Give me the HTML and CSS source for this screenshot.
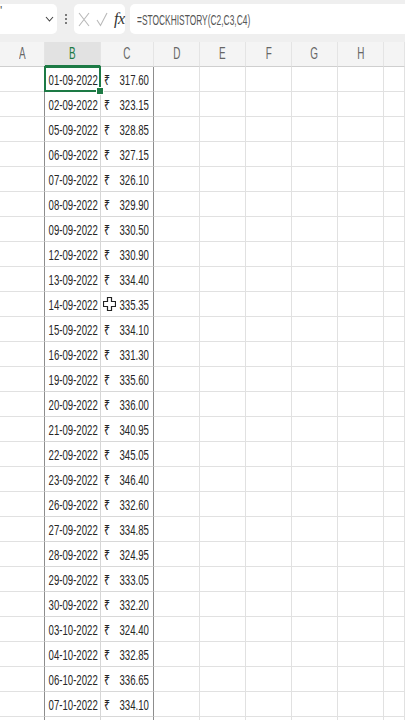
FILE: index.html
```html
<!DOCTYPE html>
<html>
<head>
<meta charset="utf-8">
<link rel="stylesheet" href="styles.css">
</head>
<body>
<div class="toolbar">
  <div class="namebox"><span class="tick">'</span><svg class="chev" width="9" height="6" viewBox="0 0 9 6"><path d="M1 1 L4.5 5 L8 1" fill="none" stroke="#444" stroke-width="1.1"/></svg></div>
  <div class="dots"><i></i><i></i><i></i></div>
  <div class="fxbox">
    <svg width="12" height="15" viewBox="0 0 12 15"><path d="M1 1 L11 14 M11 1 L1 14" stroke="#b9b9b9" stroke-width="1.1" fill="none"/></svg>
    <svg width="12" height="15" viewBox="0 0 12 15"><path d="M1 8 L4.5 13.5 L11 1" stroke="#b9b9b9" stroke-width="1.1" fill="none"/></svg>
    <span class="fx">fx</span>
  </div>
  <div class="formula"><span class="ft">=STOCKHISTORY(C2,C3,C4)</span></div>
</div>
<div class="sheet">
  <div class="row head">
    <div class="c"><span class="h">A</span></div><div class="c sel"><span class="h">B</span></div><div class="c"><span class="h">C</span></div><div class="c"><span class="h">D</span></div><div class="c"><span class="h">E</span></div><div class="c"><span class="h">F</span></div><div class="c"><span class="h">G</span></div><div class="c"><span class="h">H</span></div><div class="c"></div>
  </div>
  <div class="row"><div class="c a"></div><div class="c b active"><span class="t">01-09-2022</span></div><div class="c cc"><span class="r">₹</span><span class="t">317.60</span></div><div class="c"></div><div class="c"></div><div class="c"></div><div class="c"></div><div class="c"></div><div class="c"></div></div>
  <div class="row"><div class="c a"></div><div class="c b"><span class="t">02-09-2022</span></div><div class="c cc"><span class="r">₹</span><span class="t">323.15</span></div><div class="c"></div><div class="c"></div><div class="c"></div><div class="c"></div><div class="c"></div><div class="c"></div></div>
  <div class="row"><div class="c a"></div><div class="c b"><span class="t">05-09-2022</span></div><div class="c cc"><span class="r">₹</span><span class="t">328.85</span></div><div class="c"></div><div class="c"></div><div class="c"></div><div class="c"></div><div class="c"></div><div class="c"></div></div>
  <div class="row"><div class="c a"></div><div class="c b"><span class="t">06-09-2022</span></div><div class="c cc"><span class="r">₹</span><span class="t">327.15</span></div><div class="c"></div><div class="c"></div><div class="c"></div><div class="c"></div><div class="c"></div><div class="c"></div></div>
  <div class="row"><div class="c a"></div><div class="c b"><span class="t">07-09-2022</span></div><div class="c cc"><span class="r">₹</span><span class="t">326.10</span></div><div class="c"></div><div class="c"></div><div class="c"></div><div class="c"></div><div class="c"></div><div class="c"></div></div>
  <div class="row"><div class="c a"></div><div class="c b"><span class="t">08-09-2022</span></div><div class="c cc"><span class="r">₹</span><span class="t">329.90</span></div><div class="c"></div><div class="c"></div><div class="c"></div><div class="c"></div><div class="c"></div><div class="c"></div></div>
  <div class="row"><div class="c a"></div><div class="c b"><span class="t">09-09-2022</span></div><div class="c cc"><span class="r">₹</span><span class="t">330.50</span></div><div class="c"></div><div class="c"></div><div class="c"></div><div class="c"></div><div class="c"></div><div class="c"></div></div>
  <div class="row"><div class="c a"></div><div class="c b"><span class="t">12-09-2022</span></div><div class="c cc"><span class="r">₹</span><span class="t">330.90</span></div><div class="c"></div><div class="c"></div><div class="c"></div><div class="c"></div><div class="c"></div><div class="c"></div></div>
  <div class="row"><div class="c a"></div><div class="c b"><span class="t">13-09-2022</span></div><div class="c cc"><span class="r">₹</span><span class="t">334.40</span></div><div class="c"></div><div class="c"></div><div class="c"></div><div class="c"></div><div class="c"></div><div class="c"></div></div>
  <div class="row"><div class="c a"></div><div class="c b"><span class="t">14-09-2022</span></div><div class="c cc"><span class="r hide">₹</span><span class="t">335.35</span><svg class="cursor" width="13" height="14" viewBox="0 0 13 14"><path d="M4.5 0.5 H8.5 V4.5 H12.5 V9.5 H8.5 V13.5 H4.5 V9.5 H0.5 V4.5 H4.5 Z" fill="#fff" stroke="#222" stroke-width="1.2"/></svg></div><div class="c"></div><div class="c"></div><div class="c"></div><div class="c"></div><div class="c"></div><div class="c"></div></div>
  <div class="row"><div class="c a"></div><div class="c b"><span class="t">15-09-2022</span></div><div class="c cc"><span class="r">₹</span><span class="t">334.10</span></div><div class="c"></div><div class="c"></div><div class="c"></div><div class="c"></div><div class="c"></div><div class="c"></div></div>
  <div class="row"><div class="c a"></div><div class="c b"><span class="t">16-09-2022</span></div><div class="c cc"><span class="r">₹</span><span class="t">331.30</span></div><div class="c"></div><div class="c"></div><div class="c"></div><div class="c"></div><div class="c"></div><div class="c"></div></div>
  <div class="row"><div class="c a"></div><div class="c b"><span class="t">19-09-2022</span></div><div class="c cc"><span class="r">₹</span><span class="t">335.60</span></div><div class="c"></div><div class="c"></div><div class="c"></div><div class="c"></div><div class="c"></div><div class="c"></div></div>
  <div class="row"><div class="c a"></div><div class="c b"><span class="t">20-09-2022</span></div><div class="c cc"><span class="r">₹</span><span class="t">336.00</span></div><div class="c"></div><div class="c"></div><div class="c"></div><div class="c"></div><div class="c"></div><div class="c"></div></div>
  <div class="row"><div class="c a"></div><div class="c b"><span class="t">21-09-2022</span></div><div class="c cc"><span class="r">₹</span><span class="t">340.95</span></div><div class="c"></div><div class="c"></div><div class="c"></div><div class="c"></div><div class="c"></div><div class="c"></div></div>
  <div class="row"><div class="c a"></div><div class="c b"><span class="t">22-09-2022</span></div><div class="c cc"><span class="r">₹</span><span class="t">345.05</span></div><div class="c"></div><div class="c"></div><div class="c"></div><div class="c"></div><div class="c"></div><div class="c"></div></div>
  <div class="row"><div class="c a"></div><div class="c b"><span class="t">23-09-2022</span></div><div class="c cc"><span class="r">₹</span><span class="t">346.40</span></div><div class="c"></div><div class="c"></div><div class="c"></div><div class="c"></div><div class="c"></div><div class="c"></div></div>
  <div class="row"><div class="c a"></div><div class="c b"><span class="t">26-09-2022</span></div><div class="c cc"><span class="r">₹</span><span class="t">332.60</span></div><div class="c"></div><div class="c"></div><div class="c"></div><div class="c"></div><div class="c"></div><div class="c"></div></div>
  <div class="row"><div class="c a"></div><div class="c b"><span class="t">27-09-2022</span></div><div class="c cc"><span class="r">₹</span><span class="t">334.85</span></div><div class="c"></div><div class="c"></div><div class="c"></div><div class="c"></div><div class="c"></div><div class="c"></div></div>
  <div class="row"><div class="c a"></div><div class="c b"><span class="t">28-09-2022</span></div><div class="c cc"><span class="r">₹</span><span class="t">324.95</span></div><div class="c"></div><div class="c"></div><div class="c"></div><div class="c"></div><div class="c"></div><div class="c"></div></div>
  <div class="row"><div class="c a"></div><div class="c b"><span class="t">29-09-2022</span></div><div class="c cc"><span class="r">₹</span><span class="t">333.05</span></div><div class="c"></div><div class="c"></div><div class="c"></div><div class="c"></div><div class="c"></div><div class="c"></div></div>
  <div class="row"><div class="c a"></div><div class="c b"><span class="t">30-09-2022</span></div><div class="c cc"><span class="r">₹</span><span class="t">332.20</span></div><div class="c"></div><div class="c"></div><div class="c"></div><div class="c"></div><div class="c"></div><div class="c"></div></div>
  <div class="row"><div class="c a"></div><div class="c b"><span class="t">03-10-2022</span></div><div class="c cc"><span class="r">₹</span><span class="t">324.40</span></div><div class="c"></div><div class="c"></div><div class="c"></div><div class="c"></div><div class="c"></div><div class="c"></div></div>
  <div class="row"><div class="c a"></div><div class="c b"><span class="t">04-10-2022</span></div><div class="c cc"><span class="r">₹</span><span class="t">332.85</span></div><div class="c"></div><div class="c"></div><div class="c"></div><div class="c"></div><div class="c"></div><div class="c"></div></div>
  <div class="row"><div class="c a"></div><div class="c b"><span class="t">06-10-2022</span></div><div class="c cc"><span class="r">₹</span><span class="t">336.65</span></div><div class="c"></div><div class="c"></div><div class="c"></div><div class="c"></div><div class="c"></div><div class="c"></div></div>
  <div class="row"><div class="c a"></div><div class="c b"><span class="t">07-10-2022</span></div><div class="c cc"><span class="r">₹</span><span class="t">334.10</span></div><div class="c"></div><div class="c"></div><div class="c"></div><div class="c"></div><div class="c"></div><div class="c"></div></div>
  <div class="row"><div class="c a"></div><div class="c b"></div><div class="c cc"></div><div class="c"></div><div class="c"></div><div class="c"></div><div class="c"></div><div class="c"></div><div class="c"></div></div>
</div>
</body>
</html>
```

FILE: styles.css
```css
* { box-sizing: border-box; }
html, body { margin: 0; padding: 0; background: #fff; overflow: hidden; }
body {
  width: 405px; height: 720px;
  font-family: "Liberation Sans", Arial, sans-serif;
  color: #222;
}
.toolbar {
  height: 42px;
  background: #efefef;
  display: flex;
  align-items: flex-start;
  padding-top: 4px;
}
.namebox {
  width: 57px; height: 30px;
  background: #fff;
  border-radius: 0 5px 5px 0;
  position: relative;
  display: flex; align-items: center; justify-content: flex-end;
  padding-right: 3px;
}
.tick { position: absolute; left: 0; top: 0; font-size: 12px; color: #555; }
.dots {
  width: 17px; height: 30px;
  display: flex; flex-direction: column; align-items: center; justify-content: center; gap: 2px;
}
.dots i { width: 2px; height: 2px; background: #555; display: block; border-radius: 1px; }
.fxbox {
  width: 51px; height: 30px;
  background: #fff;
  border-radius: 5px;
  display: flex; align-items: center; gap: 6px;
  padding-left: 4px;
}
.fx {
  font-family: "Liberation Serif", "DejaVu Serif", serif;
  font-style: italic;
  font-size: 16px;
  color: #333;
  letter-spacing: -0.5px;
}
.formula {
  flex: 1;
  height: 30px;
  margin-left: 5px;
  background: #fff;
  border-radius: 5px 0 0 5px;
  font-size: 15px;
  color: #555;
  display: flex; align-items: center;
  padding-left: 7px;
  white-space: nowrap;
}
.ft { display: inline-block; transform: scaleX(0.56); transform-origin: left center; }
.row {
  display: grid;
  grid-template-columns: 45px 56px 53px 46px 46px 46px 46px 46px 1fr;
  height: 25px;
}
.c {
  border-right: 1px solid #e1e1e1;
  border-bottom: 1px solid #e1e1e1;
  font-size: 15px;
  display: flex; align-items: center;
  position: relative;
  white-space: nowrap;
  color: #262626;
}
.t { display: inline-block; transform: scaleX(0.64); transform-origin: right center; margin-left: -30px; }
.h { display: inline-block; transform: scaleX(0.62); transform-origin: center; }
.head .c {
  background: #f4f4f4;
  border-right: 1px solid #e4e4e4;
  border-bottom: 1px solid #cfcfcf;
  justify-content: center;
  color: #666;
  font-size: 16px;
}
.head .c.sel {
  background: #e2e2e2;
  color: #1d7a45;
  border-bottom: 2px solid #1d7a45;
}
.c.a { border-right: 1px solid #8d8d8d; }
.c.b { justify-content: flex-end; padding-right: 2px; border-right-color: #d6d6d6; border-bottom-color: #d8d8d8; }
.c.cc { justify-content: space-between; padding: 0 4px 0 3px; border-right: 1px solid #8d8d8d; border-bottom-color: #d8d8d8; }
.r { font-family: "Noto Sans", "DejaVu Sans", sans-serif; font-size: 14px; display: inline-block; transform: scaleX(0.75); transform-origin: left center; }
.hide { visibility: hidden; }
.cursor { position: absolute; left: 2px; top: 5px; }
.c.active::after {
  content: "";
  position: absolute;
  left: -1px; top: -1px; right: -1px; bottom: -1px;
  border: 2px solid #1d7a45;
}
.c.active::before {
  content: "";
  position: absolute;
  right: -4px; bottom: -4px;
  width: 6px; height: 6px;
  background: #1d7a45;
  border: 1px solid #fff;
  z-index: 2;
}
```
